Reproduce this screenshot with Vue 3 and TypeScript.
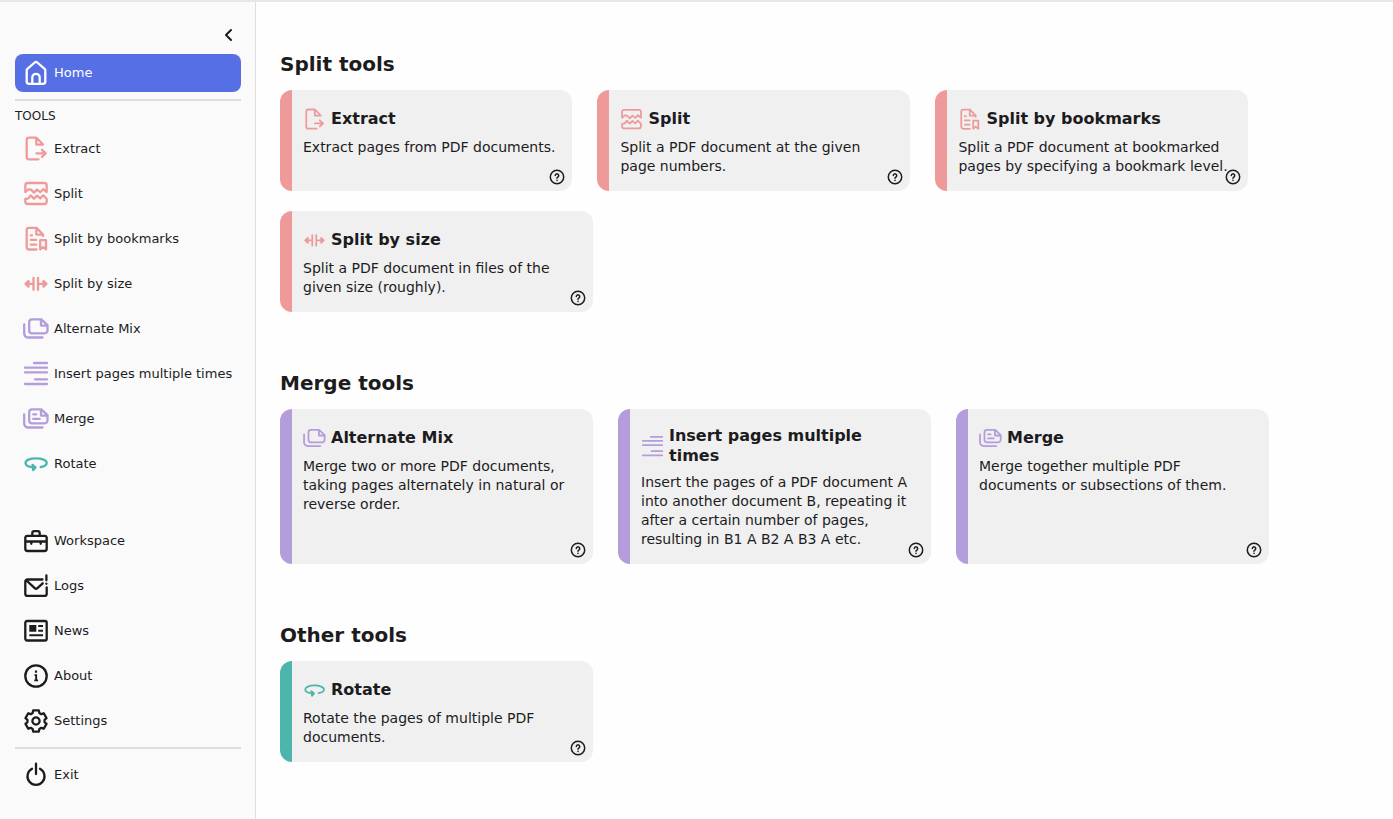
<script setup lang="ts">
import { ref } from 'vue'

type Tone = 'red' | 'purple' | 'teal'

interface Glyph {
  stroke: string
  fill?: string
}

interface Tool {
  id: string
  name: string
  tone: Tone
  text: string
}

interface Group {
  title: string
  tools: Tool[]
}

// Outline of the settings wheel: six teeth around the centre of a 26 unit box.
function gearPath(): string {
  const corners: string[] = []
  for (let tooth = 0; tooth < 6; tooth++) {
    const steps: [number, number][] = [[-23, 8.6], [-15, 10.9], [15, 10.9], [23, 8.6]]
    for (const [offset, radius] of steps) {
      const angle = ((tooth * 60 + offset) * Math.PI) / 180
      corners.push(`${(13 + radius * Math.sin(angle)).toFixed(2)} ${(13 - radius * Math.cos(angle)).toFixed(2)}`)
    }
  }
  return `M${corners.join('L')}Z`
}

const sheets =
  'M1.2 8.3v9.2a4 4 0 0 0 4 4h14.3M9 3.3h9.300l6.200 5.900v5.300a2.800 2.800 0 0 1-2.800 2.800H9a2.800 2.800 0 0 1-2.800-2.800V6.100A2.800 2.800 0 0 1 9 3.300zM18 3.600v6h6'

const glyphs: Record<string, Glyph> = {
  home: {
    stroke:
      'M3.7 10.3a2 2 0 0 1 .7-1.5l7.300-6.300a2 2 0 0 1 2.600 0l7.300 6.300a2 2 0 0 1 .7 1.500V21.500a2.300 2.300 0 0 1-2.300 2.300H6a2.300 2.300 0 0 1-2.300-2.300zM9.300 23.500v-6a3.700 3.700 0 0 1 7.400 0v6',
  },
  extract: {
    stroke:
      'M15.500 23.300H5.900a2.200 2.200 0 0 1-2.200-2.200V3.900a2.200 2.200 0 0 1 2.200-2.200h7.600L20 8.500M13.300 2v6.600h6.700M13.500 17.400h9M19 13.900l3.700 3.500-3.700 3.500',
  },
  split: {
    stroke:
      'M2.300 11V4.500A2.500 2.500 0 0 1 4.800 2h16.400a2.500 2.500 0 0 1 2.500 2.500V11L20.200 8.200 17.200 11.200 14 8.600 11 11.600 8 8.600 5.400 8.400zM2.300 18v2.500A2.500 2.500 0 0 0 4.800 23h16.400a2.500 2.500 0 0 0 2.500-2.500V18L20.200 14.300 17.200 17.400 14 14.600 11 17.600 7.600 14.400 5.400 17.400z',
  },
  bookmarks: {
    stroke:
      'M13.500 23.500H5.900a2.200 2.200 0 0 1-2.200-2.200V4.100a2.200 2.200 0 0 1 2.200-2.200h7.600L20 8.500v1.500M13.300 2.200v6.400h6.500M7.700 9.300h1.300M7.700 13.900h5.500M7.700 18.700h5.500M17.200 14.200h5.800v9.200l-2.900-2.300-2.900 2.300z',
  },
  size: {
    stroke: 'M10.500 6.800v12M15 6.800v12M10.500 12.800H2.500M15 12.800h8.500M5.500 10l-3 2.800 3 2.800zM20.500 10l3 2.800-3 2.800z',
  },
  mix: { stroke: sheets },
  insert: { stroke: 'M11 2h13M2 6.700h22M2 11.400h22M12 18.300h12M2 23h22' },
  merge: { stroke: sheets + 'M10.200 8.300h3M10.200 12.900h6.500' },
  rotate: {
    stroke:
      'M11.500 16.300C6 16 2.500 14.300 2.500 11.900c0-2.700 4.500-4.600 10.500-4.600s10.700 1.900 10.700 4.600c0 2-2.500 3.500-6 4.100M9.500 13.800l3 2.600-2.300 2.700z',
  },
  workspace: {
    stroke:
      'M4.500 7.800h17a2.200 2.200 0 0 1 2.200 2.200v10.800a2.200 2.200 0 0 1-2.200 2.200h-17a2.200 2.200 0 0 1-2.200-2.200V10a2.200 2.200 0 0 1 2.200-2.200zM9.300 7.500V5.200a2 2 0 0 1 2-2h3.400a2 2 0 0 1 2 2v2.300M2.500 13.500h21M8.300 13.800v2M17.700 13.800v2',
  },
  logs: {
    stroke:
      'M19.500 6.500h-15a2.200 2.200 0 0 0-2.200 2.200v12a2.200 2.200 0 0 0 2.200 2.200h17a2.200 2.200 0 0 0 2.200-2.200v-6.200M3.500 7.500l8.200 7.700a2 2 0 0 0 2.700 0l5.300-4.900M23.400 2.500v4.800M23.400 10.600v.2',
  },
  news: {
    stroke:
      'M4 3h18a1.700 1.700 0 0 1 1.700 1.700v16.100A1.700 1.700 0 0 1 22 22.500H4a1.700 1.700 0 0 1-1.700-1.700V4.700A1.700 1.700 0 0 1 4 3z',
    fill: 'M6.300 7h7v6.700h-7zM15.200 7h4.800v2h-4.800zM15.200 11.700h4.800v2h-4.800zM6.300 16.300h13.700v2H6.300z',
  },
  about: {
    stroke: 'M13 2.300a10.700 10.700 0 1 1 0 21.400a10.700 10.700 0 1 1 0-21.400z',
    fill: 'M11.900 7.500h2.200v2.200h-2.200zM11.500 11.300h2.600v5.200h1v1.700h-3.800v-1.700h.9v-3.500h-.7z',
  },
  settings: { stroke: gearPath() + 'M13 9.400a3.600 3.600 0 1 1 0 7.200a3.600 3.600 0 1 1 0-7.200z' },
  exit: { stroke: 'M9 6.800a8.500 8.500 0 1 0 8 0M13 1.700v10.300' },
}

const groups: Group[] = [
  {
    title: 'Split tools',
    tools: [
      { id: 'extract', name: 'Extract', tone: 'red', text: 'Extract pages from PDF documents.' },
      { id: 'split', name: 'Split', tone: 'red', text: 'Split a PDF document at the given page numbers.' },
      {
        id: 'bookmarks',
        name: 'Split by bookmarks',
        tone: 'red',
        text: 'Split a PDF document at bookmarked pages by specifying a bookmark level.',
      },
      {
        id: 'size',
        name: 'Split by size',
        tone: 'red',
        text: 'Split a PDF document in files of the given size (roughly).',
      },
    ],
  },
  {
    title: 'Merge tools',
    tools: [
      {
        id: 'mix',
        name: 'Alternate Mix',
        tone: 'purple',
        text: 'Merge two or more PDF documents, taking pages alternately in natural or reverse order.',
      },
      {
        id: 'insert',
        name: 'Insert pages multiple times',
        tone: 'purple',
        text: 'Insert the pages of a PDF document A into another document B, repeating it after a certain number of pages, resulting in B1 A B2 A B3 A etc.',
      },
      {
        id: 'merge',
        name: 'Merge',
        tone: 'purple',
        text: 'Merge together multiple PDF documents or subsections of them.',
      },
    ],
  },
  {
    title: 'Other tools',
    tools: [
      { id: 'rotate', name: 'Rotate', tone: 'teal', text: 'Rotate the pages of multiple PDF documents.' },
    ],
  },
]

const tools = groups.flatMap((group) => group.tools)

const appItems = [
  { id: 'workspace', name: 'Workspace' },
  { id: 'logs', name: 'Logs' },
  { id: 'news', name: 'News' },
  { id: 'about', name: 'About' },
  { id: 'settings', name: 'Settings' },
]

const active = ref('home')
</script>

<template>
  <div class="app">
    <nav class="sidebar" aria-label="Main">
      <button class="collapse" type="button" aria-label="Collapse sidebar">
        <svg viewBox="0 0 24 24" aria-hidden="true"><path d="M14 7l-5 5 5 5" /></svg>
      </button>
      <button class="item" :class="{ active: active === 'home' }" type="button" @click="active = 'home'">
        <svg class="icon" viewBox="0 0 26 26" aria-hidden="true"><path :d="glyphs.home.stroke" /></svg>
        <span>Home</span>
      </button>
      <hr />
      <h2 class="caption">TOOLS</h2>
      <button
        v-for="tool in tools"
        :key="tool.id"
        class="item"
        :class="{ active: active === tool.id }"
        type="button"
        @click="active = tool.id"
      >
        <svg class="icon" :class="tool.tone" viewBox="0 0 26 26" aria-hidden="true">
          <path :d="glyphs[tool.id].stroke" />
        </svg>
        <span>{{ tool.name }}</span>
      </button>
      <div class="app-items">
        <button
          v-for="item in appItems"
          :key="item.id"
          class="item"
          :class="{ active: active === item.id }"
          type="button"
          @click="active = item.id"
        >
          <svg class="icon" viewBox="0 0 26 26" aria-hidden="true">
            <path :d="glyphs[item.id].stroke" />
            <path v-if="glyphs[item.id].fill" class="solid" :d="glyphs[item.id].fill" />
          </svg>
          <span>{{ item.name }}</span>
        </button>
      </div>
      <hr />
      <button class="item" type="button">
        <svg class="icon" viewBox="0 0 26 26" aria-hidden="true"><path :d="glyphs.exit.stroke" /></svg>
        <span>Exit</span>
      </button>
    </nav>

    <main class="content">
      <section v-for="group in groups" :key="group.title">
        <h1>{{ group.title }}</h1>
        <div class="cards">
          <article v-for="tool in group.tools" :key="tool.id" class="card" :class="tool.tone">
            <header class="card-head">
              <svg class="icon" :class="tool.tone" viewBox="0 0 26 26" aria-hidden="true">
                <path :d="glyphs[tool.id].stroke" />
              </svg>
              <h3>{{ tool.name }}</h3>
            </header>
            <p>{{ tool.text }}</p>
            <button class="help" type="button" :aria-label="'Help: ' + tool.name">
              <svg viewBox="0 0 16 16" aria-hidden="true">
                <circle cx="8" cy="8" r="6.7" />
                <path d="M6.300 6.600a1.700 1.700 0 1 1 2.600 1.400c-.6.4-.9.6-.9 1.200M8 11.200v.2" />
              </svg>
            </button>
          </article>
        </div>
      </section>
    </main>
  </div>
</template>

<style>
body {
  margin: 0;
  background: #fefefe;
}
</style>

<style scoped>
.app {
  box-sizing: border-box;
  display: flex;
  min-height: 100vh;
  border-top: 2px solid #e7e7e7;
  color: #1c1c1e;
  font-family: 'DejaVu Sans', sans-serif;
}

button {
  margin: 0;
  padding: 0;
  border: 0;
  background: none;
  color: inherit;
  font: inherit;
  cursor: pointer;
}

svg {
  display: block;
  flex: none;
  fill: none;
  stroke: currentColor;
  stroke-width: 2;
  stroke-linecap: round;
  stroke-linejoin: round;
}

.solid {
  fill: currentColor;
  stroke: none;
}

.sidebar {
  box-sizing: border-box;
  display: flex;
  flex: none;
  flex-direction: column;
  gap: 7px;
  width: 256px;
  padding: 21px 14px 21px 15px;
  border-right: 1px solid #dedede;
  background: #fafafa;
}

.collapse {
  align-self: flex-end;
  width: 24px;
  height: 24px;
}

.item {
  display: flex;
  align-items: center;
  gap: 5px;
  height: 38px;
  padding: 0 8px;
  border-radius: 8px;
  font-size: 13px;
  line-height: 16px;
  text-align: left;
  white-space: nowrap;
}

.item.active {
  background: #566fe5;
  color: #fff;
}

.item .icon {
  width: 26px;
  height: 26px;
  stroke-width: 2.3;
}

hr {
  width: 100%;
  height: 2px;
  margin: 0;
  border: 0;
  background: #dedede;
}

.caption {
  margin: 0;
  padding-top: 1px;
  font-size: 12px;
  font-weight: 400;
  line-height: 14px;
}

.app-items {
  display: flex;
  flex-direction: column;
  gap: 7px;
  margin-top: 32px;
}

.icon.red {
  color: #ef9a9a;
}

.icon.purple {
  color: #b39ddb;
}

.icon.teal {
  color: #4db6ac;
}

.content {
  display: flex;
  flex: 1;
  flex-direction: column;
  gap: 59px;
  min-width: 0;
  padding: 50px 24px;
}

h1 {
  margin: 0 0 14px;
  font-size: 20px;
  line-height: 24px;
}

.cards {
  display: flex;
  flex-wrap: wrap;
  gap: 20px 25px;
}

.card {
  position: relative;
  box-sizing: border-box;
  max-width: 313px;
  padding: 17px 17px 15px 11px;
  border-left: 12px solid;
  border-radius: 12px;
  background: #f0f0f0;
}

.card.red {
  border-left-color: #ef9a9a;
}

.card.purple {
  border-left-color: #b39ddb;
}

.card.teal {
  border-left-color: #4db6ac;
}

.card-head {
  display: flex;
  align-items: center;
  gap: 5px;
  min-height: 24px;
  margin-bottom: 7px;
}

.card-head .icon {
  width: 23px;
  height: 23px;
}

h3 {
  margin: 0;
  font-size: 16px;
  line-height: 20px;
}

p {
  margin: 0;
  font-size: 14px;
  line-height: 19px;
}

.help {
  position: absolute;
  right: 7px;
  bottom: 6px;
  width: 16px;
  height: 16px;
}

.help svg {
  stroke-width: 1.5;
}
</style>
